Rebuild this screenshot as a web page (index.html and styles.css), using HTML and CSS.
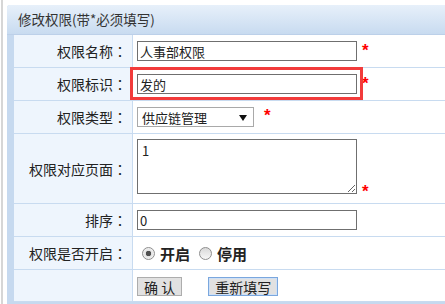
FILE: index.html
```html
<!DOCTYPE html>
<html lang="zh">
<head>
<meta charset="utf-8">
<link rel="stylesheet" href="styles.css">
</head>
<body>
<div class="page">
  <div class="panel">
    <div class="head">修改权限(带*必须填写)</div>
    <div class="form">
      <div class="row">
        <div class="lbl">权限名称<span class="colon">：</span></div>
        <div class="fld"><input class="txt" type="text" value="人事部权限"><span class="req">*</span></div>
      </div>
      <div class="row marked">
        <div class="lbl">权限标识<span class="colon">：</span></div>
        <div class="fld"><input class="txt" type="text" value="发的"><span class="req">*</span></div>
        <div class="hl"></div>
      </div>
      <div class="row">
        <div class="lbl">权限类型<span class="colon">：</span></div>
        <div class="fld">
          <span class="selwrap"><select class="sel"><option>供应链管理</option></select></span><span class="req req-sel">*</span>
        </div>
      </div>
      <div class="row tall">
        <div class="lbl">权限对应页面<span class="colon">：</span></div>
        <div class="fld fld-area"><textarea class="area">1</textarea><span class="req req-area">*</span></div>
      </div>
      <div class="row">
        <div class="lbl">排序<span class="colon">：</span></div>
        <div class="fld"><input class="txt" type="text" value="0"></div>
      </div>
      <div class="row">
        <div class="lbl">权限是否开启<span class="colon">：</span></div>
        <div class="fld">
          <label class="opt"><input class="radio" type="radio" name="on" checked><span>开启</span></label>
          <label class="opt"><input class="radio" type="radio" name="on"><span>停用</span></label>
        </div>
      </div>
      <div class="row last">
        <div class="lbl"></div>
        <div class="fld">
          <button class="btn" type="button">确 认</button>
          <button class="btn btn-focus" type="button">重新填写</button>
        </div>
      </div>
    </div>
  </div>
</div>
</body>
</html>
```
FILE: styles.css
```css
html, body {
  margin: 0;
  padding: 0;
  background: #ffffff;
  height: 304px;
  overflow: hidden;
}
body {
  font-family: "Noto Sans CJK SC", "Noto Sans", sans-serif;
  color: #222;
}
.page {
  margin-left: 1px;
  border-left: 2px solid #d6d6d6;
  padding: 5px 0 0 4px;
  height: 299px;
}
.panel {
  background: #c6d9ef;
  border-top-left-radius: 3px;
  height: 299px;
}
.head {
  height: 29px;
  border-bottom: 1px solid #bcd0e9;
  background: linear-gradient(#e7f0fa, #c8dbf0);
  border-top-left-radius: 3px;
  padding-left: 11px;
  font-size: 13.5px;
  line-height: 28px;
  color: #333;
}
.form {
  margin-left: 7px;
  background: #ffffff;
}
.row {
  display: grid;
  grid-template-columns: 119px 1fr;
  height: 32px;
  border-bottom: 1px solid #c8dbf0;
}
.row.tall { height: 69px; }
.row.last { height: 31px; }
.marked { position: relative; }
.lbl {
  background: #eef5fd;
  border-right: 1px solid #c8dbf0;
  display: flex;
  align-items: center;
  justify-content: flex-end;
  padding-right: 5px;
  font-size: 14px;
  color: #222;
}
.colon {
  font-family: "Noto Sans CJK TC", "Noto Sans CJK SC", sans-serif;
}
.fld {
  display: flex;
  align-items: center;
  padding-left: 4px;
  background: #ffffff;
}
.txt {
  box-sizing: border-box;
  width: 220px;
  height: 20px;
  border: 1px solid #6f6f6f;
  padding: 0 2px;
  margin: 0;
  font-family: "Noto Sans CJK SC", sans-serif;
  font-size: 13px;
  color: #222;
  background: #fff;
  outline: none;
}
.req {
  color: #f00;
  font-family: "Liberation Sans", sans-serif;
  font-size: 17px;
  font-weight: bold;
  line-height: 1;
  margin-left: 5px;
  align-self: center;
  margin-bottom: 2px;
}
.req-sel { margin-left: 10px; margin-bottom: 4px; }
.fld-area { align-items: flex-start; padding-top: 5px; }
.area {
  box-sizing: border-box;
  width: 220px;
  height: 55px;
  border: 1px solid #6f6f6f;
  margin: 0;
  padding: 3px 4px;
  font-family: "Noto Sans CJK SC", sans-serif;
  font-size: 13px;
  line-height: 15px;
  color: #222;
  outline: none;
}
.req-area { align-self: flex-start; margin-top: 44px; margin-bottom: 0; }
.selwrap {
  position: relative;
  display: inline-block;
}
.selwrap::after {
  content: "";
  position: absolute;
  right: 7px;
  top: 8px;
  border-left: 4px solid transparent;
  border-right: 4px solid transparent;
  border-top: 6px solid #111;
  pointer-events: none;
}
.sel {
  appearance: none;
  -webkit-appearance: none;
  box-sizing: border-box;
  width: 117px;
  height: 20px;
  border: 1px solid #a9a9a9;
  border-radius: 0;
  background: #fff;
  padding: 0 0 0 4px;
  margin: 0;
  display: block;
  font-family: "Noto Sans CJK SC", sans-serif;
  font-size: 13px;
  color: #222;
  outline: none;
}
.opt {
  display: inline-flex;
  align-items: center;
  margin-right: 9px;
  font-size: 15px;
  font-weight: bold;
  color: #222;
}
.radio {
  appearance: none;
  -webkit-appearance: none;
  box-sizing: border-box;
  width: 13px;
  height: 13px;
  margin: 0 5px 0 5px;
  border: 1px solid #8e8e8e;
  border-radius: 50%;
  background: linear-gradient(#d9d9d9, #f7f7f7);
  position: relative;
  outline: none;
}
.opt + .opt .radio { margin-left: 0; }
.radio:checked {
  background: radial-gradient(circle, #505050 0, #505050 2.5px, #e2e2e2 3px, #f5f5f5 6px);
}
.btn {
  box-sizing: border-box;
  height: 19px;
  margin: 2px 0 0 0;
  padding: 0 6px;
  border: 1px solid #adadad;
  border-radius: 0;
  background: #e1e1e1;
  font-family: "Noto Sans CJK SC", sans-serif;
  font-size: 14px;
  line-height: 16px;
  color: #222;
}
.btn + .btn { margin-left: 26px; }
.btn-focus {
  border: 1px solid #7aa7de;
  box-shadow: inset 0 0 0 1px #cfe0f5;
}
.hl {
  position: absolute;
  left: 116px;
  top: -1px;
  width: 233px;
  height: 33px;
  box-sizing: border-box;
  border: 3px solid #f23b3b;
  pointer-events: none;
}
```
